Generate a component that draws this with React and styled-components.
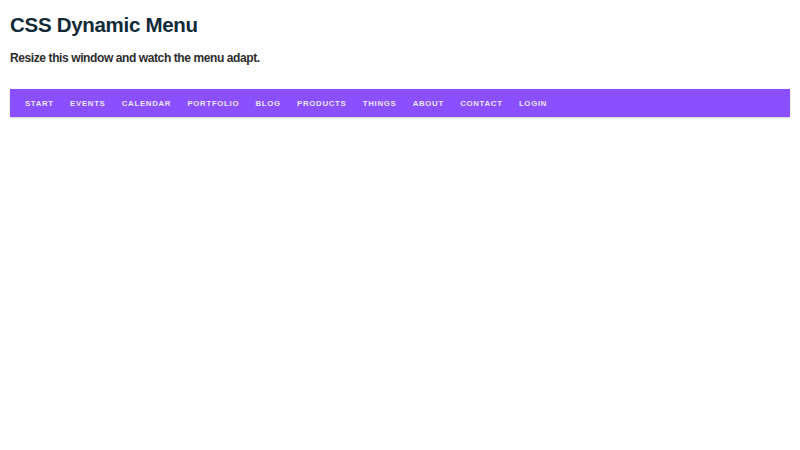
import React from 'react'
import styled, { createGlobalStyle } from 'styled-components'

const items = ['Start', 'Events', 'Calendar', 'Portfolio', 'Blog', 'Products', 'Things', 'About', 'Contact', 'Login']

export default function App() {
    return (
        <Page>
            <Global />
            <Title>CSS Dynamic Menu</Title>
            <Lead>Resize this window and watch the menu adapt.</Lead>
            <Nav>
                {items.map((item) => (
                    <NavLink key={item} href="#">{item}</NavLink>
                ))}
            </Nav>
        </Page>
    )
}

const Global = createGlobalStyle`
    body {
        margin: 0;
        background: #fff;
        font-family: "Liberation Sans", Arial, sans-serif;
    }
`

const Page = styled.div`
    padding: 10px;
`

const Title = styled.h1`
    margin: 2px 0 0;
    font-size: 20.5px;
    line-height: 26px;
    letter-spacing: -0.3px;
    color: #112a37;
`

const Lead = styled.p`
    margin: 12px 0 0;
    font-size: 12px;
    font-weight: bold;
    line-height: 16px;
    letter-spacing: -0.4px;
    color: #2d2d2d;
`

const Nav = styled.nav`
    display: flex;
    margin-top: 23px;
    padding: 0 6.75px;
    height: 28px;
    align-items: center;
    background: #8a50ff;
    box-shadow: 0 1px 2px rgba(0, 0, 0, 0.2);
`

const NavLink = styled.a`
    padding: 0 8.15px;
    font-size: 7.8px;
    font-weight: 700;
    letter-spacing: 0.7px;
    text-transform: uppercase;
    text-decoration: none;
    color: #ebe4ff;
`
